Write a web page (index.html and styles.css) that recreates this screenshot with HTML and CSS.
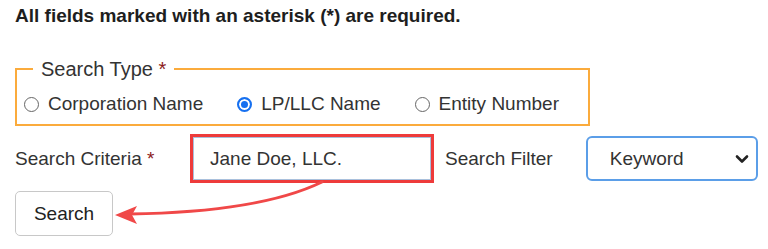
FILE: index.html
```html
<!DOCTYPE html>
<html lang="en">
<head>
    <meta charset="UTF-8">
    <meta name="viewport" content="width=device-width, initial-scale=1.0">
    <title>Business Search</title>
    <link rel="stylesheet" href="styles.css">
</head>
<body>
    <div class="container">
        <p class="note">All fields marked with an asterisk (*) are required.</p>

        <fieldset class="search-type">
            <legend>Search Type <span class="req">*</span></legend>
            <div class="radio-row">
                <label class="radio"><input type="radio" name="type" value="corp">Corporation Name</label>
                <label class="radio"><input type="radio" name="type" value="llc" checked>LP/LLC Name</label>
                <label class="radio"><input type="radio" name="type" value="number">Entity Number</label>
            </div>
        </fieldset>

        <div class="criteria-row">
            <label class="field-label" for="criteria">Search Criteria <span class="req">*</span></label>
            <div class="highlight">
                <input type="text" id="criteria" value="Jane Doe, LLC.">
            </div>
            <label class="filter-label" for="filter">Search Filter</label>
            <div class="select-wrap">
                <select id="filter">
                    <option>Keyword</option>
                    <option>Exact</option>
                </select>
                <svg class="chevron" width="14" height="10" viewBox="0 0 14 10">
                    <path d="M2 2.5 L7 7.5 L12 2.5" fill="none" stroke="#222" stroke-width="2.6" stroke-linecap="round" stroke-linejoin="round"/>
                </svg>
            </div>
        </div>

        <button class="search-btn" type="button">Search</button>

        <!-- annotation arrow -->
        <svg class="arrow" width="768" height="249" viewBox="0 0 768 249">
            <path d="M322 182 Q260 212 130 214" fill="none" stroke="#f04848" stroke-width="3" stroke-linecap="round"/>
            <polygon points="115,215 137,206 132,215 137,224" fill="#f04848"/>
        </svg>
    </div>
</body>
</html>
```

FILE: styles.css
```css
* {
    box-sizing: border-box;
}

body {
    margin: 0;
    font-family: "Liberation Sans", Arial, sans-serif;
    color: #333;
}

.container {
    position: relative;
    width: 768px;
    height: 249px;
    padding: 5px 15px 0;
}

.note {
    margin: 0;
    font-size: 19px;
    line-height: 22px;
    font-weight: bold;
    color: #1e1e1e;
}

.req {
    color: #8b1a1a;
}

.search-type {
    width: 575px;
    margin: 30px 0 0;
    padding: 11px 7px 8px;
    border: 2px solid #fbab3c;
}

.search-type legend {
    margin-left: 9px;
    padding: 0 8px;
    font-size: 20px;
    line-height: 24px;
}

.radio-row {
    display: flex;
    gap: 34px;
    white-space: nowrap;
}

.radio {
    display: flex;
    align-items: center;
    font-size: 19px;
    line-height: 24px;
}

.radio input {
    appearance: none;
    flex-shrink: 0;
    width: 15px;
    height: 15px;
    margin: 0 9px 0 0;
    border: 1.5px solid #666;
    border-radius: 50%;
    background: #fff;
}

.radio input:checked {
    border: 2px solid #1670f0;
    background: #1670f0;
    box-shadow: inset 0 0 0 2px #fff;
}

.criteria-row {
    display: flex;
    align-items: center;
    margin-top: 8px;
    font-size: 19px;
    white-space: nowrap;
}

.field-label {
    width: 175px;
    flex-shrink: 0;
}

.highlight {
    flex-shrink: 0;
    border: 3px solid #ee3b3b;
}

.highlight input {
    display: block;
    width: 238px;
    height: 43px;
    padding: 0 16px;
    border: 1px solid #a9c0dc;
    font-family: inherit;
    font-size: 19px;
    color: #333;
    outline: none;
}

.filter-label {
    margin-left: 11px;
    margin-right: 33px;
}

.select-wrap {
    position: relative;
    flex-shrink: 0;
}

.select-wrap select {
    appearance: none;
    display: block;
    width: 172px;
    height: 45px;
    padding: 0 22px;
    border: 2px solid #5b9ee8;
    border-radius: 6px;
    background: #fff;
    font-family: inherit;
    font-size: 19px;
    color: #333;
}

.chevron {
    position: absolute;
    right: 9px;
    top: 18px;
    pointer-events: none;
}

.search-btn {
    display: block;
    width: 98px;
    height: 45px;
    margin-top: 8px;
    border: 1px solid #c8c8c8;
    border-radius: 5px;
    background: #fff;
    font-family: inherit;
    font-size: 19px;
    color: #222;
    cursor: pointer;
}

.arrow {
    position: absolute;
    left: 0;
    top: 0;
    pointer-events: none;
}
```
